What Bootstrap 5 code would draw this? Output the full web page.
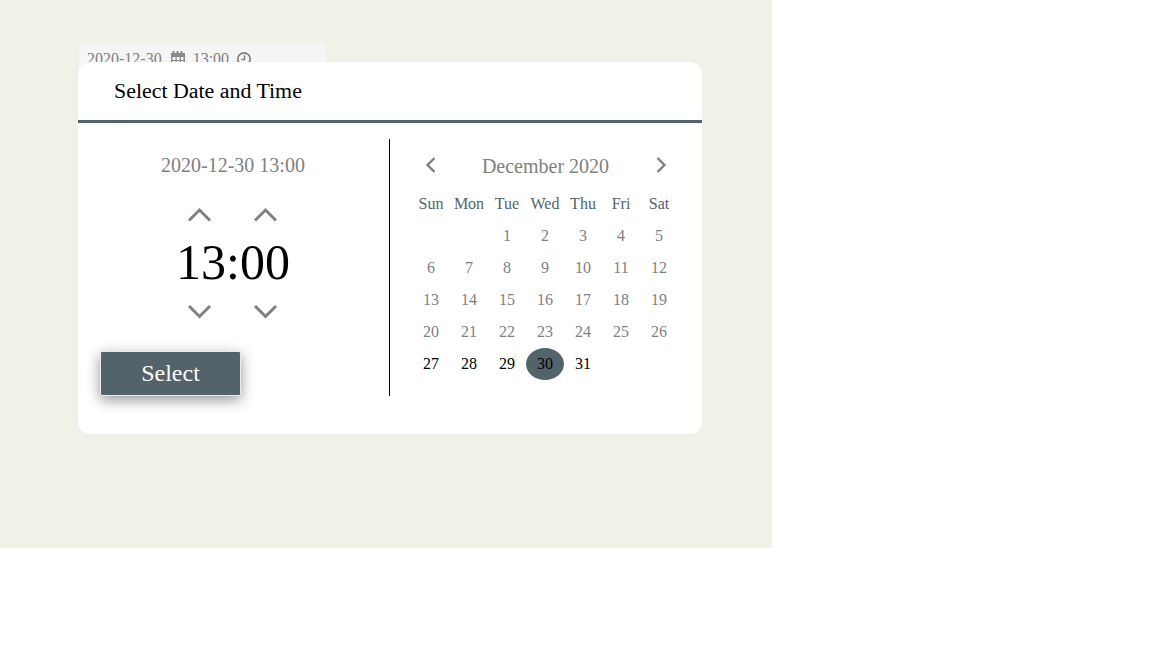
<!DOCTYPE html>
<html lang="en">
<head>
<meta charset="utf-8">
<title>Select Date and Time</title>
<link href="https://cdn.jsdelivr.net/npm/bootstrap@5.3.0/dist/css/bootstrap.min.css" rel="stylesheet">
<style>
html,body{background:#fff;margin:0;font-family:"Liberation Serif","Times New Roman",serif;}
.stage{width:772px;height:548px;background:#f1f1e8;padding:43px 0 0 79px;position:relative;}
.field{width:247px;height:40px;background:#f5f5f5;border-radius:3px 3px 0 0;padding:6px 8px;color:#808080;font-size:16px;line-height:20px;}
.field svg{margin:1px 7px 0 8px;}
.field svg.tick{margin-left:7px;}
.picker{position:absolute;left:78px;top:62px;width:624px;height:372px;background:#fff;border-radius:12px;}
.picker-head{height:61px;border-bottom:3px solid #53636a;padding:0 36px;font-size:21.9px;color:#000;line-height:58px;}
.picker-body{padding-top:16px;}
.time-side{width:312px;height:257px;border-right:1px solid #000;}
.stamp{font-size:20px;color:#808080;line-height:24px;text-align:center;width:310px;padding-top:14px;}
.clock{width:310px;margin-top:27px;}
.arrows{gap:35px;height:20px;margin-left:-2px;}
.arrows svg{display:block;}
.clock-val{font-size:50px;line-height:58px;color:#000;margin:9px 0 10px;}
.pick-btn{display:block;width:141px;height:45px;margin:30px 0 0 22px;padding:0;background:#53636a;color:#fff;border:1px solid #e8ecec;border-radius:2px;font-size:24px;line-height:41px;box-shadow:0 4px 14px rgba(0,0,0,.42);}
.cal-side{padding-left:22px;padding-top:14px;}
.cal-top{width:268px;height:24px;margin-bottom:11px;color:#808080;font-size:20px;line-height:24px;}
.cal-top span{flex:1;text-align:center;padding:2px 1px 0 0;}
.cal-top button{background:none;border:0;padding:0;width:38px;height:24px;display:flex;justify-content:center;align-items:center;}
.days{display:grid;grid-template-columns:repeat(7,38px);grid-auto-rows:32px;font-size:16px;text-align:center;line-height:32px;color:#808080;}
.days .dow{color:#53636a;}
.days .now{color:#000;}
.days .sel{color:#000;background:#53636a;border-radius:50%;}
</style>
</head>
<body>
<div class="stage">
  <div class="field d-flex align-items-start">
    <span>2020-12-30</span>
    <svg width="16" height="20" viewBox="0 0 16 20" aria-hidden="true"><path fill="#8a8a8a" d="M1 3h1.500V1h2v2h2V1h2v2h2V1h2v2H15v15H1z"/><path fill="#f5f5f5" d="M2.500 7h3v3h-3zM6.700 7h3v3h-3zM11 7h2.500v3H11zM2.500 11h3v3h-3zM6.700 11h3v3h-3zM11 11h2.500v3H11z"/></svg>
    <span>13:00</span>
    <svg class="tick" width="16" height="20" viewBox="0 0 16 20" aria-hidden="true"><circle cx="8" cy="9" r="6.200" fill="none" stroke="#808080" stroke-width="1.700"/><path d="M8.500 5.200V9.500H5.200" fill="none" stroke="#808080" stroke-width="1.500"/></svg>
  </div>
  <div class="picker">
    <div class="picker-head">Select Date and Time</div>
    <div class="picker-body d-flex">
      <div class="time-side">
        <div class="stamp">2020-12-30 13:00</div>
        <div class="clock d-flex flex-column align-items-center">
          <div class="arrows d-flex">
            <svg width="31" height="20" viewBox="0 0 31 20" aria-hidden="true"><path d="M5 16.500 15.500 6 26 16.500" fill="none" stroke="#808080" stroke-width="3"/></svg>
            <svg width="31" height="20" viewBox="0 0 31 20" aria-hidden="true"><path d="M5 16.500 15.500 6 26 16.500" fill="none" stroke="#808080" stroke-width="3"/></svg>
          </div>
          <div class="clock-val">13:00</div>
          <div class="arrows d-flex">
            <svg width="31" height="20" viewBox="0 0 31 20" aria-hidden="true"><path d="M5 5 15.500 15.500 26 5" fill="none" stroke="#808080" stroke-width="3"/></svg>
            <svg width="31" height="20" viewBox="0 0 31 20" aria-hidden="true"><path d="M5 5 15.500 15.500 26 5" fill="none" stroke="#808080" stroke-width="3"/></svg>
          </div>
        </div>
        <button type="button" class="pick-btn">Select</button>
      </div>
      <div class="cal-side">
        <div class="cal-top d-flex align-items-center">
          <button type="button" aria-label="Previous month"><svg width="12" height="18" viewBox="0 0 12 18"><path d="M9.500 2 2.500 9 9.500 16" fill="none" stroke="#808080" stroke-width="2.400"/></svg></button>
          <span>December 2020</span>
          <button type="button" aria-label="Next month"><svg width="12" height="18" viewBox="0 0 12 18"><path d="M2.500 2 9.500 9 2.500 16" fill="none" stroke="#808080" stroke-width="2.400"/></svg></button>
        </div>
        <div class="days">
          <div class="dow">Sun</div><div class="dow">Mon</div><div class="dow">Tue</div><div class="dow">Wed</div><div class="dow">Thu</div><div class="dow">Fri</div><div class="dow">Sat</div>
          <div></div><div></div><div>1</div><div>2</div><div>3</div><div>4</div><div>5</div>
          <div>6</div><div>7</div><div>8</div><div>9</div><div>10</div><div>11</div><div>12</div>
          <div>13</div><div>14</div><div>15</div><div>16</div><div>17</div><div>18</div><div>19</div>
          <div>20</div><div>21</div><div>22</div><div>23</div><div>24</div><div>25</div><div>26</div>
          <div class="now">27</div><div class="now">28</div><div class="now">29</div><div class="sel">30</div><div class="now">31</div><div></div><div></div>
        </div>
      </div>
    </div>
  </div>
</div>
<script src="https://cdn.jsdelivr.net/npm/bootstrap@5.3.0/dist/js/bootstrap.bundle.min.js"></script>
</body>
</html>
